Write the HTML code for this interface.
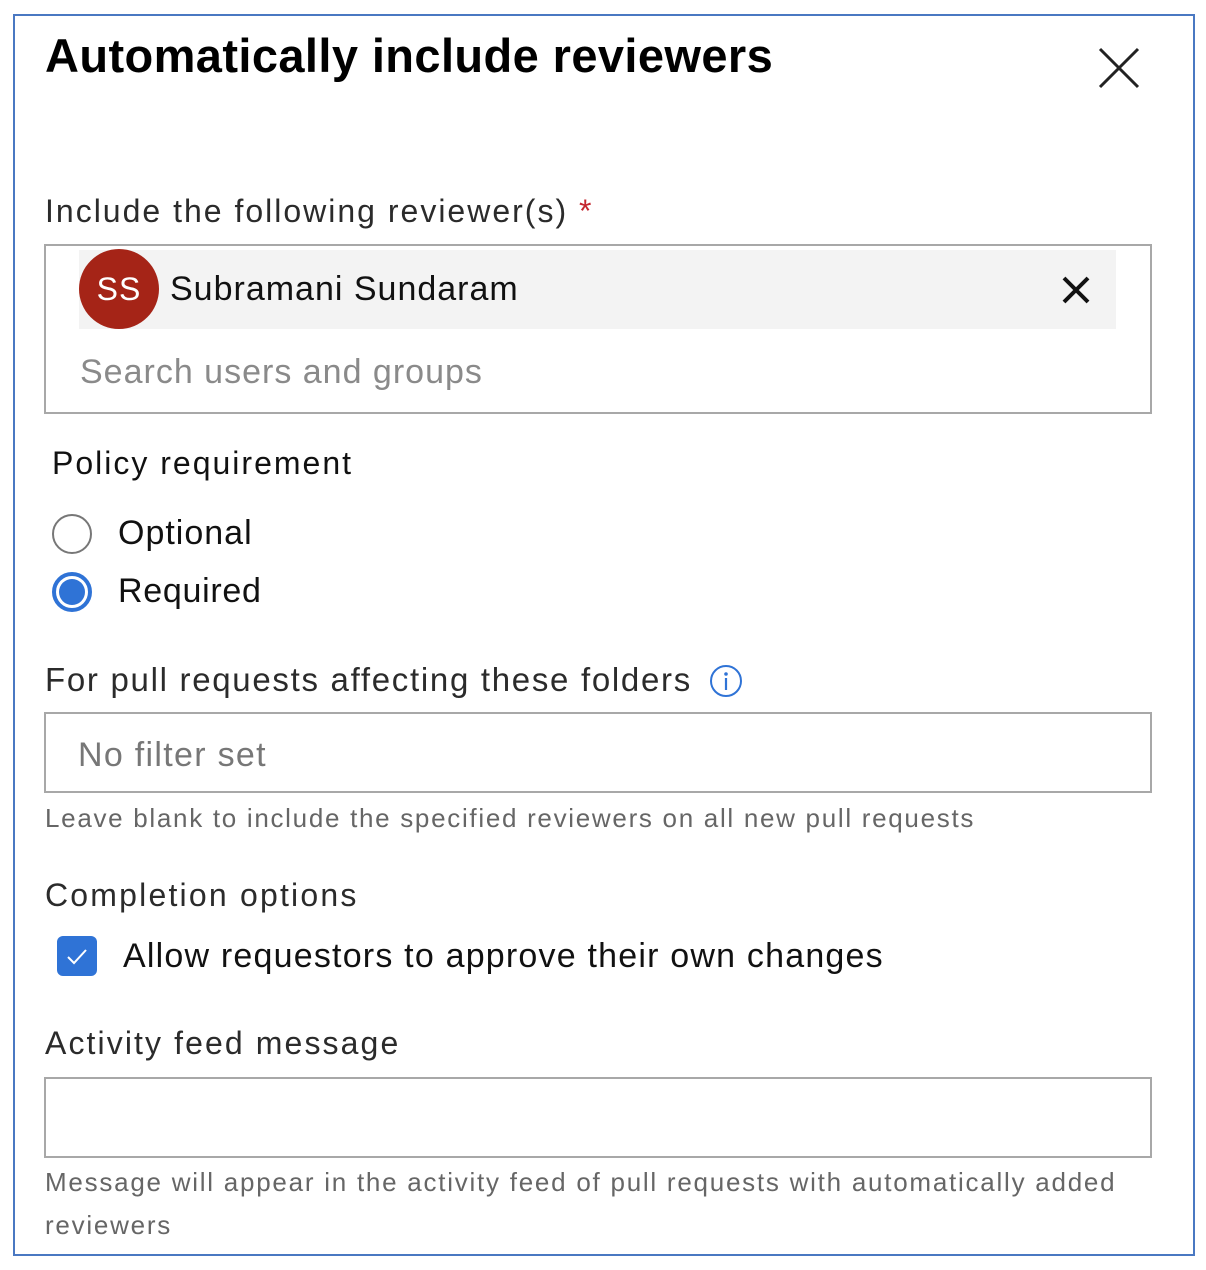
<!DOCTYPE html>
<html><head><style>
body{margin:0;width:1206px;height:1270px;background:#fff;font-family:"Liberation Sans",sans-serif;position:relative;overflow:hidden}
.a{position:absolute;white-space:nowrap}
.frame{position:absolute;left:13px;top:14px;width:1178px;height:1238px;border:2px solid #4a78c2}
.box{position:absolute;border:2px solid #a8a8a8;background:#fff}
.lbl{font-size:32px;color:#2b2b2b;letter-spacing:2px}
.big{font-size:34px;color:#111;letter-spacing:1px}
.hint{font-size:26px;color:#666;letter-spacing:1.7px}
</style></head><body>
<div class="frame"></div>
<div class="a" style="left:45px;top:28px;font-size:47px;font-weight:bold;color:#000;letter-spacing:0.4px">Automatically include reviewers</div>
<svg class="a" style="left:1098px;top:47px" width="42" height="42"><path d="M2 2L40 40M40 2L2 40" stroke="#222" stroke-width="3"/></svg>
<div class="a lbl" style="left:45px;top:193px">Include the following reviewer(s) <span style="color:#c4262e">*</span></div>
<div class="box" style="left:44px;top:244px;width:1104px;height:166px"></div>
<div class="a" style="left:79px;top:250px;width:1037px;height:79px;background:#f3f3f3"></div>
<div class="a" style="left:79px;top:249px;width:80px;height:80px;border-radius:50%;background:#a52417;color:#fff;font-size:32px;line-height:80px;text-align:center;letter-spacing:1px">SS</div>
<div class="a big" style="left:170px;top:270px">Subramani Sundaram</div>
<svg class="a" style="left:1062px;top:276px" width="28" height="28"><path d="M2 2L26 26M26 2L2 26" stroke="#111" stroke-width="4"/></svg>
<div class="a big" style="left:80px;top:353px;color:#8a8a8a">Search users and groups</div>
<div class="a lbl" style="left:52px;top:445px;color:#111">Policy requirement</div>
<div class="a" style="left:52px;top:514px;width:36px;height:36px;border:2px solid #777;border-radius:50%"></div>
<div class="a big" style="left:118px;top:514px">Optional</div>
<div class="a" style="left:52px;top:572px;width:32px;height:32px;border:4px solid #2f73d6;border-radius:50%;background:#fff"></div>
<div class="a" style="left:59px;top:579px;width:26px;height:26px;border-radius:50%;background:#2f73d6"></div>
<div class="a big" style="left:118px;top:572px;letter-spacing:0.7px">Required</div>
<div class="a lbl" style="left:45px;top:661px;font-size:33px;letter-spacing:1.7px">For pull requests affecting these folders</div>
<svg class="a" style="left:709px;top:664px" width="34" height="34"><circle cx="17" cy="17" r="15" fill="none" stroke="#2f73d6" stroke-width="2"/><circle cx="17" cy="10" r="1.8" fill="#2f73d6"/><path d="M17 14v12" stroke="#2f73d6" stroke-width="2.2"/></svg>
<div class="box" style="left:44px;top:712px;width:1104px;height:77px"></div>
<div class="a big" style="left:78px;top:736px;color:#777;letter-spacing:1.3px">No filter set</div>
<div class="a hint" style="left:45px;top:803px">Leave blank to include the specified reviewers on all new pull requests</div>
<div class="a lbl" style="left:45px;top:877px;letter-spacing:2.2px">Completion options</div>
<div class="a" style="left:57px;top:936px;width:40px;height:40px;border-radius:6px;background:#2f73d6"></div>
<svg class="a" style="left:57px;top:936px" width="40" height="40"><path d="M11 21l6 6 12-13" fill="none" stroke="#fff" stroke-width="2"/></svg>
<div class="a big" style="left:123px;top:937px;letter-spacing:1.2px">Allow requestors to approve their own changes</div>
<div class="a lbl" style="left:45px;top:1025px;letter-spacing:2.1px">Activity feed message</div>
<div class="box" style="left:44px;top:1077px;width:1104px;height:77px"></div>
<div class="a hint" style="left:45px;top:1167px;letter-spacing:1.75px">Message will appear in the activity feed of pull requests with automatically added</div>
<div class="a hint" style="left:45px;top:1210px;letter-spacing:1.75px">reviewers</div>
</body></html>
